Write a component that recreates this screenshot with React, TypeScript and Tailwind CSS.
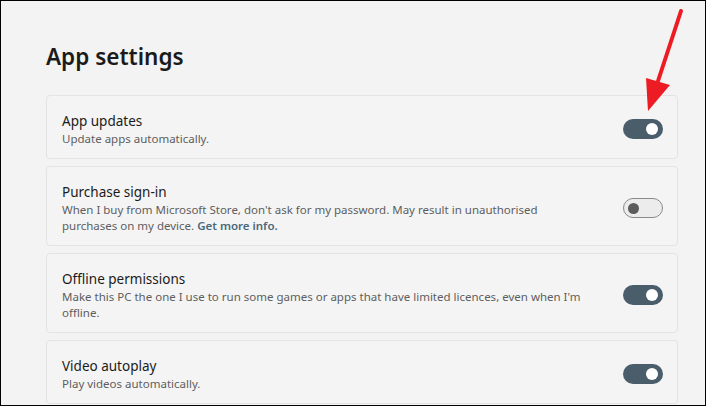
import React from 'react';

interface SettingRow {
  title: string;
  description: React.ReactNode;
  on: boolean;
}

const rows: SettingRow[] = [
  { title: 'App updates', description: 'Update apps automatically.', on: true },
  {
    title: 'Purchase sign-in',
    description: (
      <>
        When I buy from Microsoft Store, don't ask for my password. May result in unauthorised purchases on my device.{' '}
        <span className="font-semibold text-[#4b687b]">Get more info.</span>
      </>
    ),
    on: false,
  },
  {
    title: 'Offline permissions',
    description:
      "Make this PC the one I use to run some games or apps that have limited licences, even when I'm offline.",
    on: true,
  },
  { title: 'Video autoplay', description: 'Play videos automatically.', on: true },
];

function Toggle({ on }: { on: boolean }) {
  if (on) {
    return (
      <div className="flex h-[20px] w-[40px] shrink-0 items-center justify-end rounded-full bg-[#4a5d6b] pr-[5px]">
        <div className="h-[12px] w-[12px] rounded-full bg-white" />
      </div>
    );
  }
  return (
    <div className="flex h-[20px] w-[40px] shrink-0 items-center rounded-full border border-[#8a8a8a] bg-[#ececec] pl-[4px]">
      <div className="h-[11px] w-[11px] rounded-full bg-[#5c5c5c]" />
    </div>
  );
}

export default function App() {
  return (
    <div
      className="relative h-[406px] w-[706px] overflow-hidden border border-black bg-[#f3f3f3]"
      style={{ fontFamily: '"Noto Sans", "Open Sans", sans-serif' }}
    >
      <div className="pl-[45px] pr-[27px] pt-[40px]">
        <h1 className="text-[22.5px] font-semibold leading-[32px] text-[#1b1b1b]">App settings</h1>
        <div className="mt-[22px] flex flex-col gap-[7px]">
          {rows.map((row) => (
            <div
              key={row.title}
              className="flex items-center justify-between rounded-[4px] border border-[#e3e3e3] bg-[#f4f4f4] pb-[11px] pl-[15px] pr-[14px] pt-[15px]"
            >
              <div className="max-w-[526px]">
                <div className="text-[13.5px] leading-[20px] text-[#1b1b1b]">{row.title}</div>
                <div className="text-[11.5px] leading-[16px] text-[#5e5e5e]">{row.description}</div>
              </div>
              <Toggle on={row.on} />
            </div>
          ))}
        </div>
      </div>
      <svg className="absolute left-0 top-0" width="706" height="406" viewBox="0 0 706 406">
        <line x1="680" y1="10" x2="657" y2="80" stroke="#ed1c24" strokeWidth="4" strokeLinecap="round" />
        <polygon points="645,77 669,84 647,110" fill="#ed1c24" />
      </svg>
    </div>
  );
}
